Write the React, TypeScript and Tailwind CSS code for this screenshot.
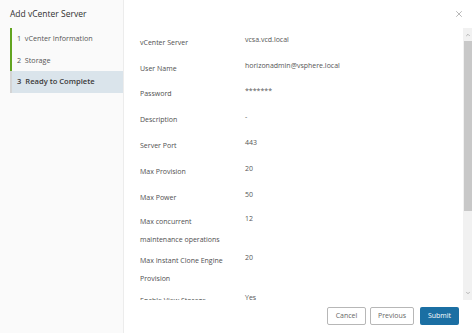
import React from 'react';
import { X, ChevronUp, ChevronDown } from 'lucide-react';

// mb は行ごとの下余白（参考画像の行間に合わせる）
const rows: { label: string[]; value: string; mb: string }[] = [
  { label: ['vCenter Server'], value: 'vcsa.vcd.local', mb: 'mb-[8px]' },
  { label: ['User Name'], value: 'horizonadmin@vsphere.local', mb: 'mb-[7px]' },
  { label: ['Password'], value: '*******', mb: 'mb-[8px]' },
  { label: ['Description'], value: '-', mb: 'mb-[8px]' },
  { label: ['Server Port'], value: '443', mb: 'mb-[7.5px]' },
  { label: ['Max Provision'], value: '20', mb: 'mb-[8px]' },
  { label: ['Max Power'], value: '50', mb: 'mb-[6.5px]' },
  { label: ['Max concurrent', 'maintenance operations'], value: '12', mb: 'mb-[3px]' },
  { label: ['Max Instant Clone Engine', 'Provision'], value: '20', mb: 'mb-[4px]' },
  { label: ['Enable View Storage'], value: 'Yes', mb: 'mb-[8px]' },
];

const steps = [
  { n: 1, name: 'vCenter Information', done: true },
  { n: 2, name: 'Storage', done: true },
  { n: 3, name: 'Ready to Complete', done: false },
];

export default function App() {
  return (
    <div
      className="flex h-[333px] w-[474px] overflow-hidden bg-white text-[#565656]"
      style={{ fontFamily: '"Open Sans", "Noto Sans", sans-serif' }}
    >
      {/* 左側のステップ一覧 */}
      <div className="flex w-[124px] shrink-0 flex-col border-r border-[#ececec] bg-[#fafafa]">
        <div className="pl-[10px] pt-[6px] text-[8.5px] leading-[16px] text-[#313131]">Add vCenter Server</div>
        <div className="mt-[6px] flex flex-col pl-[10px]">
          {steps.map((s) => (
            <div
              key={s.n}
              className={`flex h-[21.5px] items-center border-l-2 pl-[5px] ${
                s.done
                  ? 'border-[#62a420] text-[7.2px]'
                  : 'border-[#d4d4d4] bg-[#dae4eb] text-[7.6px] font-semibold text-[#3a3a3a]'
              }`}
            >
              {s.n}&nbsp;&nbsp;{s.name}
            </div>
          ))}
        </div>
      </div>

      {/* 右側の本体 */}
      <div className="flex min-w-0 flex-1 flex-col">
        <div className="flex h-[28px] shrink-0 items-center justify-end pr-[10px]">
          <X size={10} strokeWidth={1.3} className="text-[#7a7a7a]" />
        </div>
        <div className="flex min-h-0 flex-1 pr-[2px]">
          <div className="min-w-0 flex-1 overflow-hidden pl-[16px] pt-[6px]">
            {rows.map((r) => (
              <div key={r.label[0]} className={`flex ${r.mb}`}>
                <div className="w-[105px] shrink-0 text-[7px] leading-[18px] text-[#4f4f4f]">
                  {r.label.map((l) => (
                    <div key={l}>{l}</div>
                  ))}
                </div>
                <div className="text-[7px] leading-[12px] text-[#565656]">{r.value}</div>
              </div>
            ))}
          </div>
          {/* スクロールバー */}
          <div className="flex w-[9px] shrink-0 flex-col items-center bg-[#f1f1f1] pb-[4px] pt-[4px]">
            <ChevronUp size={6} strokeWidth={2} className="text-[#7a7a7a]" />
            <div className="mt-[3px] h-[170px] w-[8px] bg-[#c8c8c8]" />
            <div className="flex-1" />
            <ChevronDown size={6} strokeWidth={2} className="text-[#7a7a7a]" />
          </div>
        </div>
        <div className="flex h-[33px] shrink-0 items-center justify-end pb-[1px] pr-[15px] text-[7px]">
          <button className="mr-[4px] h-[18px] w-[39px] rounded-[2px] border border-[#b7b7b7] bg-white text-[#666]">
            Cancel
          </button>
          <button className="mr-[6px] h-[18px] w-[44px] rounded-[2px] border border-[#b7b7b7] bg-white text-[#666]">
            Previous
          </button>
          <button className="h-[18px] w-[39px] rounded-[2px] bg-[#1b6fa3] text-white">Submit</button>
        </div>
      </div>
    </div>
  );
}
